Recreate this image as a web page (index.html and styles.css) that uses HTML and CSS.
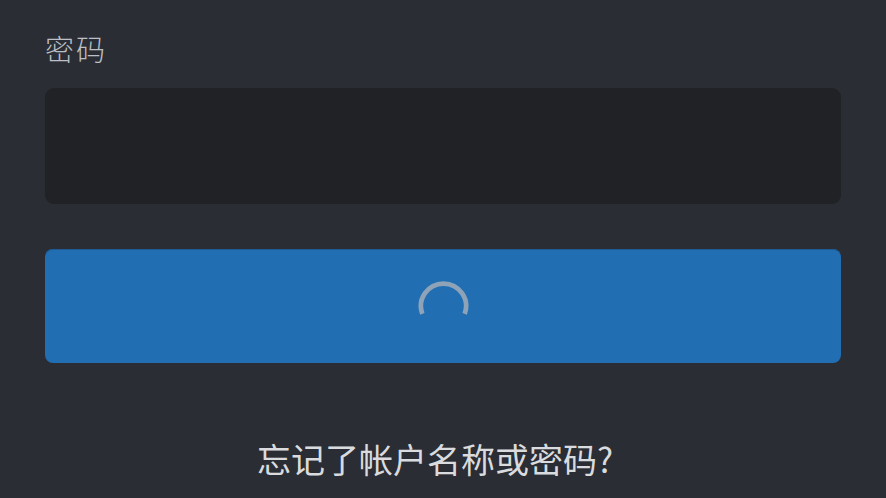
FILE: index.html
```html
<!DOCTYPE html>
<html lang="zh-CN">
<head>
<meta charset="utf-8">
<title>登录</title>
<link rel="stylesheet" href="styles.css">
</head>
<body>
<main class="form">
  <label class="label" for="pw">密码</label>
  <div class="input" id="pw"></div>
  <button class="submit" type="button" aria-label="加载中">
    <svg class="spinner" viewBox="0 0 52 52" width="51" height="51" aria-hidden="true">
      <path d="M4.4 33.5A23 23 0 1 1 47.6 33.5" fill="none" stroke="#8fa3b8" stroke-width="4.8"/>
    </svg>
  </button>
  <p class="forgot">忘记了帐户名称或密码?</p>
</main>
</body>
</html>
```

FILE: styles.css
```css
html, body {
  margin: 0;
  padding: 0;
  height: 498px;
  overflow: hidden;
  background: #2a2d34;
}
.form {
  display: flex;
  flex-direction: column;
  padding: 30px 45px 0;
  font-family: "Noto Sans CJK SC", "Noto Sans", sans-serif;
}
.label {
  height: 36px;
  margin-bottom: 22px;
  font-size: 29px;
  line-height: 36px;
  letter-spacing: 2px;
  font-weight: 300;
  color: #bcbfc5;
}
.input {
  height: 116px;
  border-radius: 9px;
  background: #212226;
}
.submit {
  display: flex;
  align-items: center;
  justify-content: center;
  height: 114px;
  margin-top: 45px;
  padding: 0;
  border: 0;
  border-radius: 8px;
  background: #226eb2;
  box-shadow: inset 0 1px 0 #1c5b95;
}
.spinner {
  display: block;
}
.forgot {
  margin: 73px 0 0;
  padding-right: 16px;
  text-align: center;
  font-size: 34px;
  line-height: 46px;
  font-weight: 400;
  color: #d9dbde;
}
```
